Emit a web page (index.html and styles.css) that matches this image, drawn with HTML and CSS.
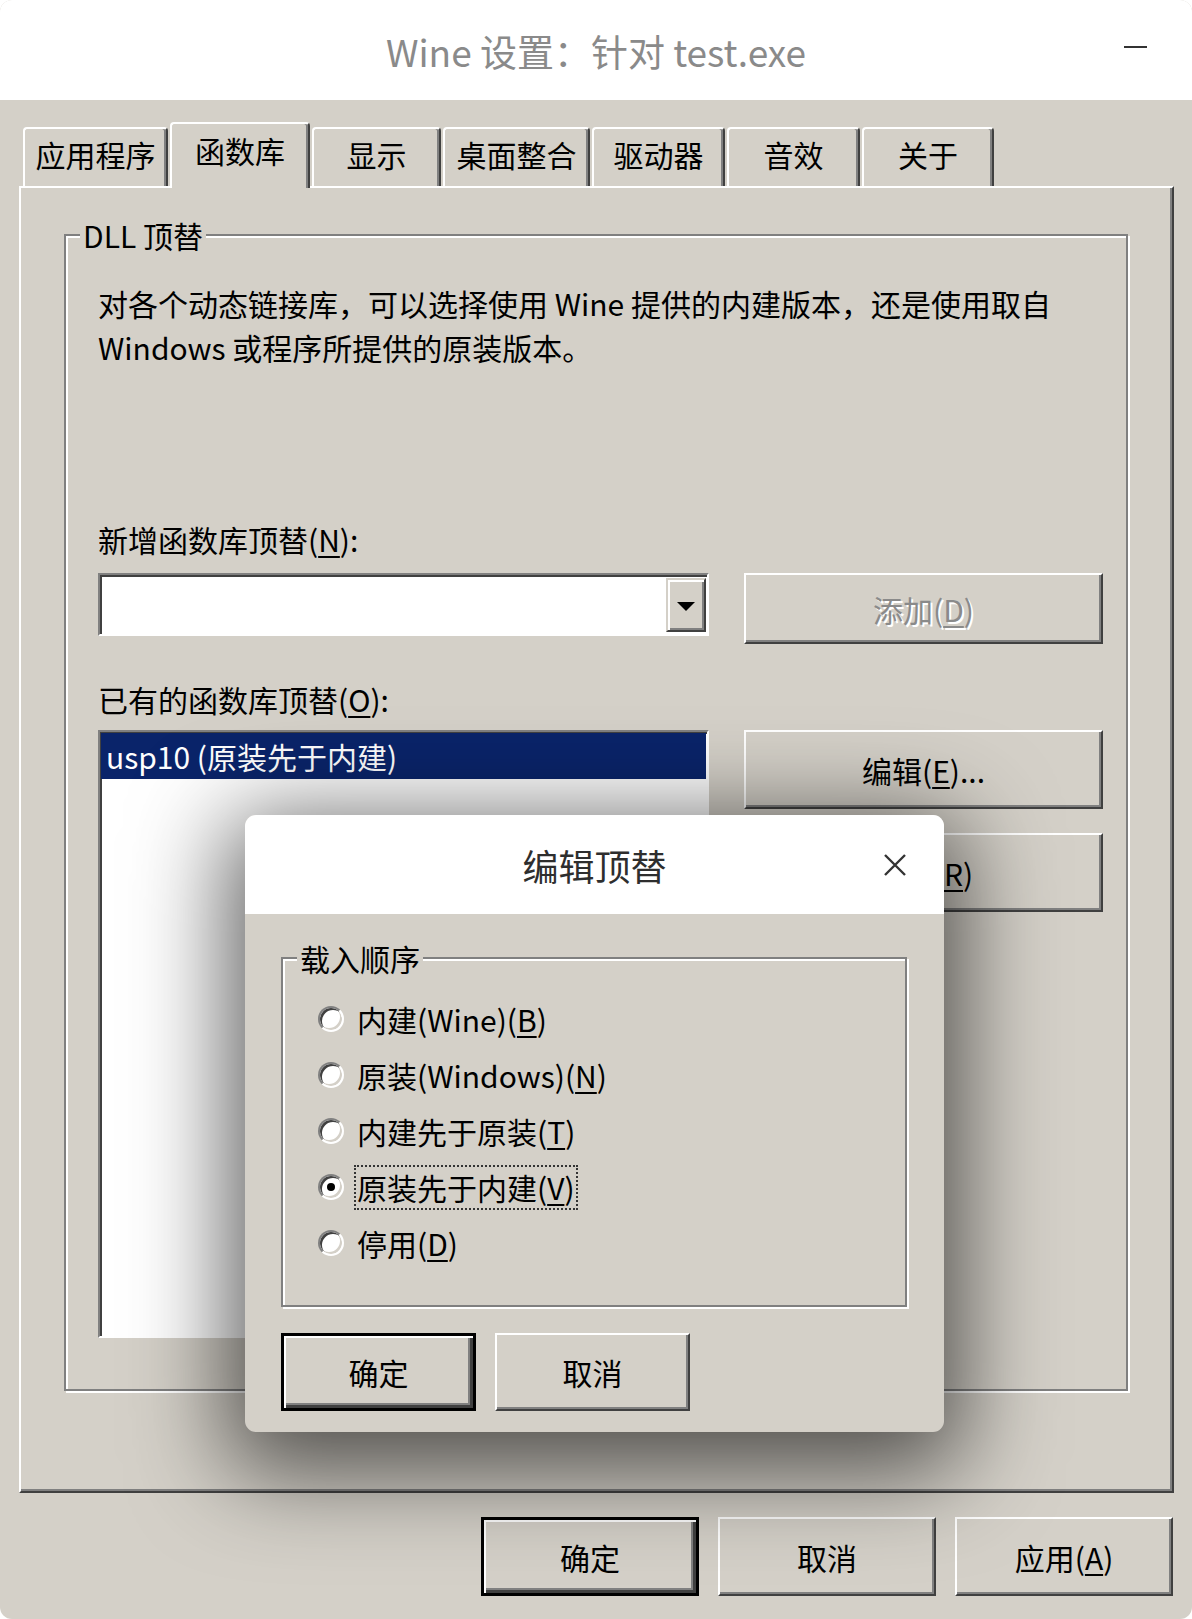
FILE: index.html
```html
<!DOCTYPE html>
<html lang="zh-CN">
<head>
    <meta charset="UTF-8">
    <title>Wine 设置</title>
    <link rel="stylesheet" href="styles.css">
</head>
<body>
<div class="window">
    <header class="titlebar">
        <span></span>
        <span class="title">Wine 设置：针对 test.exe</span>
        <span class="minimize"></span>
    </header>

    <main class="client">
        <div class="tabs">
            <div class="tab tab-1">应用程序</div>
            <div class="tab tab-2 active">函数库</div>
            <div class="tab tab-3">显示</div>
            <div class="tab tab-4">桌面整合</div>
            <div class="tab tab-5">驱动器</div>
            <div class="tab tab-6">音效</div>
            <div class="tab tab-7">关于</div>
        </div>

        <div class="panel">
            <fieldset class="group dll-group">
                <legend>DLL 顶替</legend>
                <p class="desc">对各个动态链接库，可以选择使用 Wine 提供的内建版本，还是使用取自<br>Windows 或程序所提供的原装版本。</p>

                <div class="field-label new-label">新增函数库顶替(<u>N</u>):</div>
                <div class="row">
                    <div class="combo">
                        <div class="combo-btn"><span class="arrow"></span></div>
                    </div>
                    <button class="btn add-btn" disabled>添加(<u>D</u>)</button>
                </div>

                <div class="field-label old-label">已有的函数库顶替(<u>O</u>):</div>
                <div class="row list-row">
                    <div class="listbox">
                        <div class="list-item selected">usp10 (原装先于内建)</div>
                    </div>
                    <div class="side-buttons">
                        <button class="btn side-btn">编辑(<u>E</u>)...</button>
                        <button class="btn side-btn">删除(<u>R</u>)</button>
                    </div>
                </div>
            </fieldset>
        </div>

        <div class="footer">
            <button class="btn btn-default foot-btn">确定</button>
            <button class="btn foot-btn">取消</button>
            <button class="btn foot-btn">应用(<u>A</u>)</button>
        </div>
    </main>

    <div class="dialog">
        <header class="dialog-title">
            <span></span>
            <span class="dialog-caption">编辑顶替</span>
            <svg class="close" width="24" height="24" viewBox="0 0 24 24">
                <path d="M2 2 L22 22 M22 2 L2 22" stroke="#333" stroke-width="2.4" fill="none"/>
            </svg>
        </header>
        <div class="dialog-body">
            <fieldset class="group order-group">
                <legend>载入顺序</legend>
                <div class="radio-row"><span class="radio"></span><span class="radio-label">内建(Wine)(<u>B</u>)</span></div>
                <div class="radio-row"><span class="radio"></span><span class="radio-label">原装(Windows)(<u>N</u>)</span></div>
                <div class="radio-row"><span class="radio"></span><span class="radio-label">内建先于原装(<u>T</u>)</span></div>
                <div class="radio-row"><span class="radio checked"></span><span class="radio-label focused">原装先于内建(<u>V</u>)</span></div>
                <div class="radio-row"><span class="radio"></span><span class="radio-label">停用(<u>D</u>)</span></div>
            </fieldset>
            <div class="dialog-buttons">
                <button class="btn btn-default dlg-btn">确定</button>
                <button class="btn dlg-btn">取消</button>
            </div>
        </div>
    </div>
</div>
</body>
</html>
```

FILE: styles.css
```css
* {
    box-sizing: border-box;
}
body {
    margin: 0;
    font-family: "Noto Sans CJK SC", "Noto Sans", sans-serif;
    background: #fff;
}
.window {
    position: relative;
    width: 1192px;
    height: 1619px;
    background: #d4d0c8;
    border-radius: 12px;
    overflow: hidden;
}
u {
    text-decoration-thickness: 2px;
    text-underline-offset: 4px;
}

/* title bar */
.titlebar {
    height: 100px;
    background: #fff;
    display: grid;
    grid-template-columns: 1fr auto 1fr;
    align-items: center;
}
.title {
    font-size: 37px;
    color: #8a8a8a;
    line-height: 44px;
    padding-top: 2px;
}
.minimize {
    justify-self: end;
    width: 23px;
    height: 2px;
    background: #333;
    margin-right: 45px;
    margin-top: -6px;
}

/* client area */
.client {
    padding: 22px 18px 0 19px;
}
.tabs {
    display: flex;
    align-items: flex-end;
    gap: 2px;
    height: 64px;
    padding-left: 4px;
    position: relative;
    z-index: 1;
}
.tab {
    height: 59px;
    font-size: 30px;
    line-height: 50px;
    text-align: center;
    color: #000;
    border-top: 2px solid #fff;
    border-left: 2px solid #fff;
    border-right: 2px solid #404040;
    border-radius: 4px 4px 0 0;
    box-shadow: inset -2px 0 #808080;
    background: #d4d0c8;
}
.tab.active {
    height: 66px;
    margin-bottom: -2px;
    line-height: 52px;
}
.tab-1 { width: 145px; }
.tab-2 { width: 140px; }
.tab-3 { width: 129px; }
.tab-4 { width: 147px; }
.tab-5 { width: 133px; }
.tab-6 { width: 133px; }
.tab-7 { width: 132px; }

.panel {
    height: 1307px;
    border: 2px solid;
    border-color: #fff #404040 #404040 #fff;
    box-shadow: inset -2px -2px #808080;
    display: flex;
    flex-direction: column;
    padding: 27px 44px 100px 43px;
}

/* group boxes */
.group {
    margin: 0;
    border: 2px solid #808080;
    box-shadow: inset 2px 2px #fff, 2px 2px #fff;
}
.group legend {
    font-size: 30px;
    line-height: 40px;
    padding: 0 3px;
    background: #d4d0c8;
    color: #000;
}
.dll-group {
    flex: 1;
    display: flex;
    flex-direction: column;
    padding: 26px 23px 51px 32px;
}
.dll-group legend {
    margin-left: -18px;
}
.desc {
    margin: 0;
    font-size: 30px;
    line-height: 44px;
    color: #000;
}
.field-label {
    font-size: 30px;
    line-height: 44px;
    color: #000;
}
.new-label {
    margin-top: 148px;
    margin-bottom: 12px;
}
.old-label {
    margin-top: 33px;
    margin-bottom: 9px;
}
.row {
    display: flex;
    gap: 35px;
    align-items: flex-start;
}
.list-row {
    flex: 1;
    align-items: stretch;
}

/* combo box */
.combo {
    width: 611px;
    height: 63px;
    background: #fff;
    border: 2px solid;
    border-color: #808080 #fff #fff #808080;
    box-shadow: inset 2px 2px #404040;
    padding: 3px 1px 2px 2px;
    display: flex;
    justify-content: flex-end;
}
.combo-btn {
    width: 40px;
    height: 100%;
    background: #d4d0c8;
    border: 2px solid;
    border-color: #d4d0c8 #404040 #404040 #d4d0c8;
    box-shadow: inset 2px 2px #fff, inset -2px -2px #808080;
    display: flex;
    align-items: center;
    justify-content: center;
}
.arrow {
    width: 0;
    height: 0;
    border-left: 9px solid transparent;
    border-right: 9px solid transparent;
    border-top: 9px solid #000;
    margin-top: 2px;
}

/* buttons */
.btn {
    font-family: "Noto Sans CJK SC", "Noto Sans", sans-serif;
    font-size: 30px;
    color: #000;
    background: #d4d0c8;
    border: 2px solid;
    border-color: #fff #404040 #404040 #fff;
    box-shadow: inset -2px -2px #808080;
    padding: 0;
    margin: 0;
}
.btn-default {
    border: 3px solid #000;
    box-shadow: inset 2px 2px #fff, inset -3px -3px #404040, inset -5px -5px #808080;
}
.btn:disabled {
    color: #8a8a8a;
    text-shadow: 2px 2px 0 #fff;
}
.add-btn {
    width: 359px;
    height: 71px;
}

/* list box */
.listbox {
    width: 611px;
    background: #fff;
    border: 2px solid;
    border-color: #808080 #fff #fff #808080;
    box-shadow: inset 2px 2px #404040;
    padding: 1px 1px 0 1px;
}
.list-item {
    font-size: 30px;
    line-height: 46px;
    padding-left: 5px;
}
.list-item.selected {
    background: #0a246a;
    color: #fff;
}
.side-buttons {
    display: flex;
    flex-direction: column;
    gap: 24px;
}
.side-btn {
    width: 359px;
    height: 79px;
}

/* footer */
.footer {
    display: flex;
    justify-content: flex-end;
    gap: 19px;
    margin-top: 24px;
    padding-right: 1px;
}
.foot-btn {
    width: 218px;
    height: 79px;
}

/* modal dialog */
.dialog {
    position: absolute;
    left: 245px;
    top: 815px;
    width: 699px;
    height: 617px;
    background: #d4d0c8;
    border-radius: 11px;
    overflow: hidden;
    box-shadow: 0 22px 95px 18px rgba(0, 0, 0, 0.62);
}
.dialog-title {
    height: 99px;
    background: #fff;
    display: grid;
    grid-template-columns: 1fr auto 1fr;
    align-items: center;
}
.dialog-caption {
    font-size: 36px;
    color: #2e2e2e;
    line-height: 44px;
}
.close {
    justify-self: end;
    margin-right: 37px;
}
.dialog-body {
    padding: 24px 37px 0 36px;
}
.order-group {
    height: 369px;
    padding: 13px 0 30px 35px;
}
.order-group legend {
    margin-left: -21px;
}
.radio-row {
    display: flex;
    align-items: center;
    height: 56px;
    gap: 10px;
}
.radio {
    width: 26px;
    height: 26px;
    border-radius: 50%;
    background: #fff;
    border: 2px solid;
    border-color: #808080 #fff #fff #808080;
    box-shadow: inset 2px 2px #404040, inset -2px -2px #d4d0c8;
    display: flex;
    align-items: center;
    justify-content: center;
}
.radio.checked::after {
    content: "";
    width: 8px;
    height: 8px;
    border-radius: 50%;
    background: #000;
}
.radio-label {
    font-size: 30px;
    line-height: 41px;
    padding: 0 1px;
    border: 2px dotted transparent;
    color: #000;
}
.radio-label.focused {
    border-color: #333;
}
.dialog-buttons {
    display: flex;
    gap: 19px;
    margin-top: 26px;
}
.dlg-btn {
    width: 195px;
    height: 78px;
}
```
